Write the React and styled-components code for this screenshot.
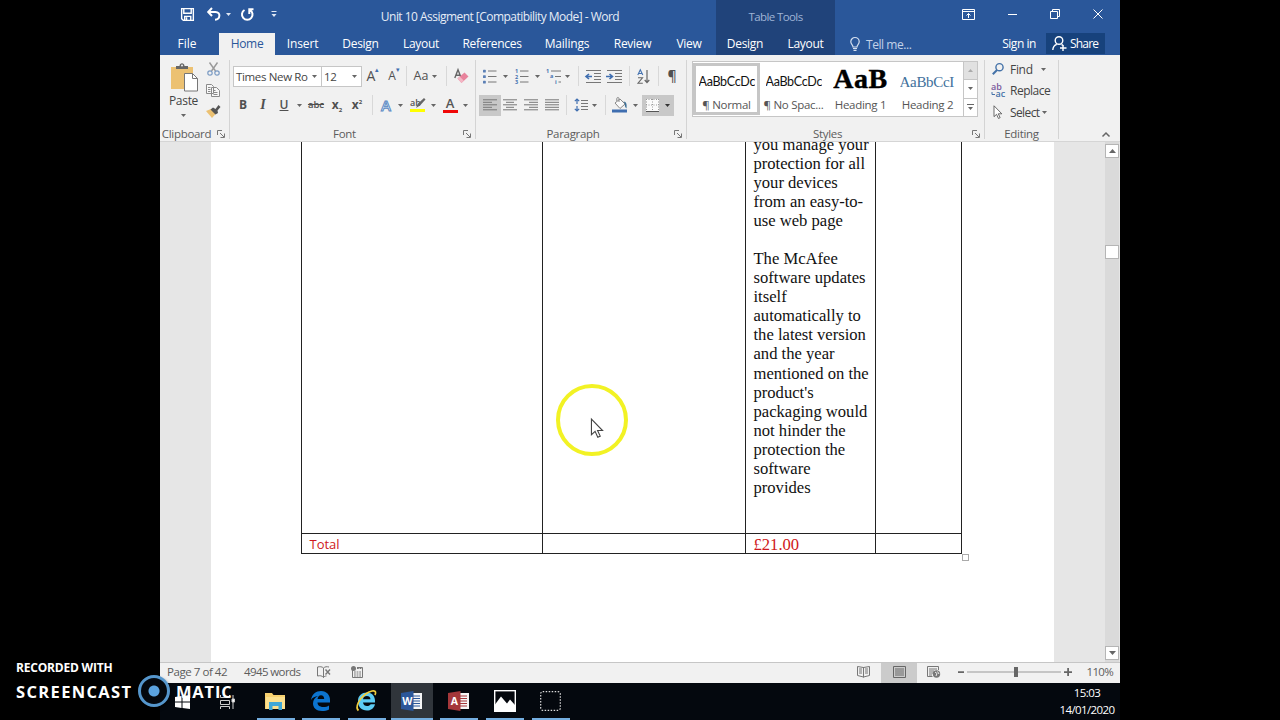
import React from "react";
import styled, { createGlobalStyle, css } from "styled-components";

const GlobalStyle = createGlobalStyle`
  * {
    box-sizing: border-box;
  }
  body {
    margin: 0;
    background: #000;
    overflow: hidden;
    font-family: "Open Sans", "Noto Sans", sans-serif;
    font-size: 12px;
    color: #444;
  }
  svg {
    display: block;
    flex: none;
    overflow: visible;
  }
`;

const tabs = [
  { name: "Insert", w: 55, fit: -0.1 },
  { name: "Design", w: 61, fit: -0.3 },
  { name: "Layout", w: 60, fit: -0.3 },
  { name: "References", w: 82, fit: -0.3 },
  { name: "Mailings", w: 68, fit: -0.2 },
  { name: "Review", w: 63, fit: -0.3 },
  { name: "View", w: 50, fit: -0.3 },
];

const lines = [
  "you manage your",
  "protection for all",
  "your devices",
  "from an easy-to-",
  "use web page",
  "",
  "The McAfee",
  "software updates",
  "itself",
  "automatically to",
  "the latest version",
  "and the year",
  "mentioned on the",
  "product's",
  "packaging would",
  "not hinder the",
  "protection the",
  "software",
  "provides",
];

const Arrow = ({ ml, color = "#666" }) => (
  <Slot $w={7} $ml={ml}>
    <svg width="5" height="3" viewBox="0 0 5 3">
      <path d="M0 0h5L2.500 3z" fill={color} />
    </svg>
  </Slot>
);

const Launcher = () => (
  <svg width="8" height="8" viewBox="0 0 8 8" fill="none" stroke="#777">
    <path d="M.5 5V.5H5M3 3l4 4M7.500 3.500v4h-4" />
  </svg>
);

const Lines = ({ rows, color = "#777" }) => (
  <svg width="14" height="12" viewBox="0 0 14 12" stroke={color}>
    {rows.map(([x1, x2], i) => (
      <path key={i} d={`M${x1} ${i * 2.5 + 0.8}H${x2}`} />
    ))}
  </svg>
);

const Clipboard = () => (
  <svg width="28" height="29" viewBox="0 0 28 29">
    <rect x="1" y="4" width="22" height="22" fill="#ecc172" />
    <path d="M6 6V3h3.500C9.500-.8 14.500-.8 14.500 3H18v3z" fill="#666" />
    <circle cx="12" cy="2.500" r="1" fill="#f1f1f1" />
    <path d="M14.500 10.500h8l5 5v12.500h-13z" fill="#fff" stroke="#777" />
    <path d="M22.500 10.500v5h5" fill="none" stroke="#777" />
  </svg>
);

const Scissors = () => (
  <svg width="13" height="14" viewBox="0 0 13 14" fill="none">
    <path d="M2.500.5l6 8.500M10.500.5l-6 8.500" stroke="#999" strokeWidth="1.400" />
    <circle cx="3" cy="11" r="2.200" stroke="#7c9cc4" strokeWidth="1.200" />
    <circle cx="10" cy="11" r="2.200" stroke="#7c9cc4" strokeWidth="1.200" />
  </svg>
);

const Copy = () => (
  <svg width="14" height="13" viewBox="0 0 14 13" fill="#f8f8f8" stroke="#8a8a8a">
    <path d="M.5.5h5l2 2v7h-7zM5.500 3.500h5l3 3v6h-8z" />
    <path d="M2 3.500h2.500M2 5.500h2.500M2 7.500h2.500M7.500 6.500h2M7.500 8.500h4M7.500 10.500h4" />
  </svg>
);

const Painter = () => (
  <svg width="15" height="13" viewBox="0 0 15 13">
    <path d="M0 6l5-2 5 4.500L6 13z" fill="#ecc172" />
    <path d="M4.500 4.500l2.500-2 2.500 1.500L12.500 0l2 2-3 3.500.5 2.500-2.500 1.500z" fill="#555" />
  </svg>
);

const Eraser = () => (
  <svg width="15" height="14" viewBox="0 0 15 14">
    <path d="M.8 9L4 .8 7.200 9M2 6.200h4" fill="none" stroke="#666" strokeWidth="1.400" />
    <path d="M3.500 9.500L10.500 3.500l4 4-7 6.500z" fill="#e8839c" />
    <path d="M3.500 9.500l2.200-1.900 4 4L7.500 14z" fill="#f3b6c4" />
  </svg>
);

const Highlighter = () => (
  <svg width="16" height="17" viewBox="0 0 16 17">
    <text x="0" y="8.500" fontSize="9" fontWeight="600" fill="#555">ab</text>
    <path d="M6 11l2-4.500L14 1l1.500 1.500-5.500 6z" fill="#666" />
    <rect x="0" y="12" width="15" height="3" fill="#ffff00" />
  </svg>
);

const ListIcon = ({ kind }) => (
  <svg width="14" height="15" viewBox="0 0 14 15">
    {[2, 7.5, 13].map((y, i) => (
      <React.Fragment key={y}>
        {kind === "bullet" ? (
          <rect x="0" y={y - 1.3} width="2.800" height="2.800" rx=".6" fill="#5b7fb5" />
        ) : (
          <text x="0" y={y + 2} fontSize="5.500" fontWeight="700" fill="#4472b0">{i + 1}</text>
        )}
        <path d={`M5 ${y}h8.500`} stroke="#777" />
      </React.Fragment>
    ))}
  </svg>
);

const MultiList = () => (
  <svg width="17" height="15" viewBox="0 0 17 15" stroke="#777">
    <path d="M5 2h10M9 7.500h6M12.500 13H15" />
    <g fill="#4472b0" stroke="none" fontSize="5.500" fontWeight="700">
      <text x="0" y="4">1</text>
      <text x="4" y="9">a</text>
      <text x="9" y="14.500">i</text>
    </g>
  </svg>
);

const Indent = ({ inward }) => (
  <svg width="16" height="13" viewBox="0 0 16 13" fill="none" stroke="#777">
    <path d="M1 .5h15M9 3.500h7M9 6.500h7M9 9.500h7M1 12.500h15" />
    <path d={inward ? "M0 6.500h6M3.500 4l3 2.500-3 2.500" : "M1 6.500h6M4 4L1 6.500 4 9"} stroke="#3f6eb0" strokeWidth="1.600" />
  </svg>
);

const Sort = () => (
  <svg width="13" height="15" viewBox="0 0 13 15" fill="none">
    <path d="M.8 6L3.300.8 5.800 6M1.500 4.500h3.600" stroke="#4472b0" strokeWidth="1.100" />
    <path d="M1 8.800h4.500L1 14.200h4.800" stroke="#666" strokeWidth="1.100" />
    <path d="M10 1v12.500M7.700 11l2.300 2.500L12.300 11" stroke="#666" strokeWidth="1.200" />
  </svg>
);

const Spacing = () => (
  <svg width="14" height="14" viewBox="0 0 14 14" fill="none">
    <path d="M3 1v5M3 8v5M.8 3.200L3 1l2.200 2.200M.8 10.800L3 13l2.200-2.200" stroke="#3f6eb0" strokeWidth="1.200" />
    <path d="M7 2.500h7M7 5.500h7M7 8.500h7M7 11.500h7" stroke="#777" />
  </svg>
);

const Bucket = () => (
  <svg width="16" height="16" viewBox="0 0 16 16">
    <path d="M3 6l5-4 5 5-5 4.500z" fill="#fafafa" stroke="#888" />
    <path d="M7 5V1.500C7 .2 4.800.2 4.800 1.500V4" fill="none" stroke="#888" />
    <path d="M11.500 4.500c3 0 3.500 3 3 7-1.500-1.500-2-3-1.500-4.500z" fill="#3b6f96" />
    <rect x="0" y="12.500" width="15" height="3" fill="#3f6eb0" />
  </svg>
);

const Borders = () => (
  <svg width="13" height="13" viewBox="0 0 13 13">
    <rect width="13" height="12" fill="#fbfbfb" />
    <path d="M.5 0v12M6.500 0v12M12.500 0v12M0 .5h13M0 6h13" stroke="#999" strokeDasharray="1 1.500" />
    <path d="M0 12.500h13" stroke="#555" />
  </svg>
);

const Pointer = ({ size = 13 }) => (
  <svg width={size * 0.7} height={size} viewBox="0 0 12 18">
    <path d="M1 1v14l3.300-3 2.400 5.300 2.200-1-2.400-5H11z" fill="#fff" stroke="#444" strokeWidth="1" />
  </svg>
);

const Magnifier = () => (
  <svg width="12" height="12" viewBox="0 0 12 12" fill="none" stroke="#4472a8">
    <circle cx="7.500" cy="4.200" r="3.600" strokeWidth="1.400" />
    <path d="M5 7L.8 11.200" strokeWidth="2" />
  </svg>
);

const ReplaceIcon = () => (
  <svg width="15" height="15" viewBox="0 0 15 15" fontSize="9" fontWeight="600" letterSpacing="0">
    <text x="0" y="6.500" fill="#7a5a9c">ab</text>
    <text x="4.500" y="13.500" fill="#4472a8">ac</text>
    <path d="M1 9v2.500h3" fill="none" stroke="#4472a8" />
  </svg>
);

const SpellBook = () => (
  <svg width="14" height="12" viewBox="0 0 14 12" fill="none" stroke="#777">
    <path d="M6.500 2C5 .5 3 .5.500 1v9c2.500-.5 4.500-.5 6 1.500 1-1.500 2-1.500 3-1.500M6.500 2v9.500M6.500 2C8 .5 10 .5 12 1" />
    <path d="M8.500 3.500l4.500 5M13 3.500l-4.500 5" strokeWidth="1.400" />
  </svg>
);

const MacroIcon = () => (
  <svg width="12" height="12" viewBox="0 0 12 12" fill="none" stroke="#777">
    <path d="M1.500 4v7.500h10v-10H6" />
    <path d="M6 2.500h5.500M3 6h7M3 8h7M3 10h7" strokeDasharray="1.800 .8" />
    <circle cx="2.500" cy="2.500" r="2.500" fill="#777" stroke="none" />
  </svg>
);

const ReadMode = () => (
  <svg width="13" height="12" viewBox="0 0 13 12" fill="none" stroke="#777">
    <path d="M6.500 1.500L.5.500v9l6 1.500 6-1.500v-9zM6.500 1v10.500" />
    <path d="M2 3h3M2 5h3M2 7h3M8 3h3M8 5h3M8 7h3" />
  </svg>
);

const PrintMode = () => (
  <svg width="13" height="12" viewBox="0 0 13 12" fill="none" stroke="#666">
    <path d="M.5.500h12v11H.5zM2 3h9M2 5h9M2 7h9M2 9h9" />
  </svg>
);

const WebMode = () => (
  <svg width="14" height="12" viewBox="0 0 14 12" fill="none" stroke="#777">
    <path d="M11.500 4V.5H.5v10h5M2 3h8M2 5h5M2 7h4M2 9h3" />
    <circle cx="9.500" cy="8" r="3.700" fill="#777" stroke="none" />
    <path d="M8 6l2 1.500L9 10M10.500 5.500L12 8" stroke="#eee" />
  </svg>
);

const EdgeGlyph = () => (
  <svg width="19" height="20" viewBox="0 0 19 20">
    <path
      d="M0 9C1 3 5 0 10 0c6 0 9 4.500 9 9v2.500H6.500c0 3 2.500 4.500 6 4.500 2 0 4-.5 5.500-1.500v4c-2 1-4.500 1.500-7 1.500C5 20 2 16.500 2 12.500c0-3.500 2-6 5-7.500C4 5.300 1.500 6.500 0 9zm6.500-1h6.700c0-2.500-1.200-3.800-3.200-3.800S7 5.500 6.500 8z"
      fill="#0c74cf"
    />
  </svg>
);

const ExplorerGlyph = () => (
  <svg width="21" height="22" viewBox="0 0 21 22">
    <path
      d="M2 11C2 5.500 6 2.500 10.800 2.500c5.500 0 8.700 4 8.200 10H7c.3 2.500 2 3.500 4 3.500 1.800 0 3-.6 3.600-1.800H19c-1 4-4 6.300-8.200 6.300C5.500 20.500 2 17 2 11zm5-1.800h7.500C14.300 7 13 6 10.900 6 8.700 6 7.300 7.200 7 9.200z"
      fill="#5ccbf3"
    />
    <path d="M2.500 20.500C-1.500 17 4 8 9 4.500 14 .5 19 0 19.500 2c.2.800 0 2-.6 3" fill="none" stroke="#f2cd3c" strokeWidth="1.700" />
  </svg>
);

const OfficeGlyph = ({ letter, color }) => (
  <svg width="21" height="20" viewBox="0 0 21 20">
    <rect x="9" y="2" width="12" height="16" fill="#f5f5f5" />
    <path d="M12 5h7M12 7.500h7M12 10h7M12 12.500h7M12 15h7" stroke={color} />
    <path d="M0 2l12.500-2v20L0 18z" fill={color} />
    <text x="6.300" y="13.800" fontSize="10.500" fontWeight="700" fill="#fff" textAnchor="middle">{letter}</text>
  </svg>
);

const FolderGlyph = () => (
  <svg width="21" height="18" viewBox="0 0 21 18">
    <path d="M0 1h7l1.500 2H20v14H0z" fill="#f6d06f" />
    <path d="M1 5h19v12H1z" fill="#fbe08e" />
    <path d="M4 18v-8h13v8h-3.500v-4h-6v4z" fill="#3fa7d6" />
  </svg>
);

const PhotoGlyph = () => (
  <svg width="22" height="22" viewBox="0 0 22 22">
    <rect x=".7" y=".7" width="20.600" height="20.600" fill="#05080e" stroke="#fff" strokeWidth="1.400" />
    <path d="M1 14.500l6-8 6 7 3-4 5 5.500v6H1z" fill="#fff" />
  </svg>
);

const SnipGlyph = () => (
  <svg width="21" height="20" viewBox="0 0 21 20">
    <rect x=".7" y=".7" width="19.600" height="18.600" rx="2" fill="none" stroke="#ddd" strokeWidth="1.200" strokeDasharray="1.500 1.500" />
  </svg>
);

const apps = [
  { name: "folder", icon: <FolderGlyph />, w: 38 },
  { name: "edge", icon: <EdgeGlyph />, w: 38, ml: 7 },
  { name: "explorer", icon: <ExplorerGlyph />, w: 38, ml: 8 },
  { name: "word", icon: <OfficeGlyph letter="W" color="#2b579a" />, w: 42, ml: 5, active: true },
  { name: "access", icon: <OfficeGlyph letter="A" color="#a4373a" />, w: 38, ml: 7 },
  { name: "photos", icon: <PhotoGlyph />, w: 38, ml: 8 },
  { name: "snip", icon: <SnipGlyph />, w: 38, ml: 8 },
];

function TitleBar() {
  return (
    <TitleRow>
      <QuickAccess>
        <Slot $w={16} $ml={19}>
          <svg width="13" height="13" viewBox="0 0 14 14" fill="none" stroke="#fff" strokeWidth="1.500">
            <path d="M.7.7h12.600v12.600H2.500L.7 11.500zM3 .7v5h8v-5M4 13V9h6.500v4M6 10v3" />
          </svg>
        </Slot>
        <Slot $w={16} $ml={11}>
          <svg width="14" height="13" viewBox="0 0 14 13" fill="none" stroke="#fff" strokeWidth="2">
            <path d="M5 0L1.200 4 5 8M1.500 4h7c5.500 0 5 7.500-.5 7.700" />
          </svg>
        </Slot>
        <Arrow ml={3} color="#dfe7f3" />
        <Slot $w={16} $ml={7}>
          <svg width="13" height="13" viewBox="0 0 13 13" fill="none" stroke="#fff" strokeWidth="2">
            <path d="M3.500 2A5.300 5.300 0 1 0 9 2M8.300 6V1.200H12.500" />
          </svg>
        </Slot>
        <Slot $w={8} $ml={15}>
          <svg width="6" height="6" viewBox="0 0 6 6" fill="#dfe7f3">
            <path d="M.5 0h5v1h-5zM.5 3h5L3 6z" />
          </svg>
        </Slot>
      </QuickAccess>
      <DocTitle>Unit 10 Assigment [Compatibility Mode] - Word</DocTitle>
      <ContextTitle>Table Tools</ContextTitle>
      <WindowButtons>
        <svg width="13" height="11" viewBox="0 0 13 11" fill="none" stroke="#fff">
          <path d="M.5.500h12v10H.5zM.5 2.500h12M6.500 9V4.500M4.500 6.500l2-2 2 2" />
        </svg>
        <svg width="9" height="10" viewBox="0 0 9 10" stroke="#fff">
          <path d="M0 5.500h9" />
        </svg>
        <svg width="10" height="10" viewBox="0 0 10 10" fill="none" stroke="#fff">
          <path d="M.5 2.500h7v7h-7zM2.500 2.500v-2h7v7h-2" />
        </svg>
        <svg width="10" height="10" viewBox="0 0 10 10" stroke="#fff">
          <path d="M.5.500l9 9M9.500.500l-9 9" />
        </svg>
      </WindowButtons>
    </TitleRow>
  );
}

function TabBar() {
  return (
    <TabRow>
      <Tab $w={54}>File</Tab>
      <HomeTab>Home</HomeTab>
      {tabs.map((tab) => (
        <Tab key={tab.name} $w={tab.w} $fit={tab.fit}>{tab.name}</Tab>
      ))}
      <ContextTabs>
        <Tab $w={58} $fit={-0.3}>Design</Tab>
        <Tab $w={63} $fit={-0.3}>Layout</Tab>
      </ContextTabs>
      <TellMe>
        <svg width="10" height="14" viewBox="0 0 10 14" fill="none" stroke="#d5e0f0" strokeWidth="1.200">
          <path d="M3 10C3 8 .8 7.200.8 4.700a4.200 4.200 0 0 1 8.400 0C9.200 7.200 7 8 7 10zM3 11.500h4M3.500 13.300h3" />
        </svg>
        Tell me...
      </TellMe>
      <SignIn>Sign in</SignIn>
      <Share>
        <svg width="15" height="15" viewBox="0 0 15 15" fill="none" stroke="#fff" strokeWidth="1.400">
          <circle cx="7" cy="4.500" r="3.800" />
          <path d="M.8 14c.2-3 1.700-5 4-5.700M9.500 8.500c.8.300 1.500 1 2 1.800M11 9v6M8 12h6.500" />
        </svg>
        Share
      </Share>
    </TabRow>
  );
}

function ClipboardGroup() {
  return (
    <Group $w={70}>
      <ClipboardBody>
        <PasteButton>
          <Clipboard />
          <span>Paste</span>
          <Arrow />
        </PasteButton>
        <ClipboardTools>
          <Scissors />
          <Copy />
          <Painter />
        </ClipboardTools>
      </ClipboardBody>
      <GroupLabel><span>Clipboard</span><Launcher /></GroupLabel>
    </Group>
  );
}

function FontGroup() {
  return (
    <Group $w={246}>
      <Tools>
        <Combo $w={89} $ml={3}>Times New Ro<Arrow /></Combo>
        <Combo $w={41}>12<Arrow /></Combo>
        <Slot $w={16} $ml={3}><Glyph $size={14}>A</Glyph><Caret>▴</Caret></Slot>
        <Slot $w={16} $ml={5}><Glyph $size={12}>A</Glyph><Caret>▾</Caret></Slot>
        <Rule $ml={4} />
        <Slot $w={20} $ml={4}><Glyph $size={12.5}>Aa</Glyph></Slot>
        <Arrow />
        <Rule $ml={8} />
        <Slot $w={16} $ml={6}><Eraser /></Slot>
      </Tools>
      <Tools>
        <Slot $w={14} $ml={6}><Glyph $size={12} $weight={700}>B</Glyph></Slot>
        <Slot $w={14} $ml={6}><Glyph as="i" $size={14} $weight={700} $serif>I</Glyph></Slot>
        <Slot $w={14} $ml={7}><Glyph as="u" $size={12} $weight={600}>U</Glyph></Slot>
        <Arrow ml={5} />
        <Slot $w={18} $ml={4}><Glyph as="s" $size={9.5} $weight={600}>abc</Glyph></Slot>
        <Slot $w={14} $ml={5}><Glyph $size={12} $weight={700}>x<sub>2</sub></Glyph></Slot>
        <Slot $w={14} $ml={6}><Glyph $size={12} $weight={700}>x<sup>2</sup></Glyph></Slot>
        <Rule $ml={8} />
        <Slot $w={16} $ml={5}><Outlined>A</Outlined></Slot>
        <Arrow ml={3} />
        <Slot $w={16} $ml={6}><Highlighter /></Slot>
        <Arrow ml={4} />
        <Slot $w={16} $ml={5}><FontColor>A</FontColor></Slot>
        <Arrow ml={4} />
      </Tools>
      <GroupLabel><span>Font</span><Launcher /></GroupLabel>
    </Group>
  );
}

function ParagraphGroup() {
  return (
    <Group $w={211}>
      <Tools>
        <Slot $w={16} $ml={6}><ListIcon kind="bullet" /></Slot>
        <Arrow ml={4} />
        <Slot $w={16} $ml={5}><ListIcon kind="number" /></Slot>
        <Arrow ml={4} />
        <Slot $w={18} $ml={4}><MultiList /></Slot>
        <Arrow ml={1} />
        <Rule $ml={7} />
        <Slot $w={16} $ml={6}><Indent /></Slot>
        <Slot $w={16} $ml={5}><Indent inward /></Slot>
        <Rule $ml={7} />
        <Slot $w={16} $ml={5}><Sort /></Slot>
        <Rule $ml={7} />
        <Slot $w={16} $ml={5}><Glyph $size={14} $weight={600}>¶</Glyph></Slot>
      </Tools>
      <Tools>
        <Pressed $w={22} $ml={3}><Lines rows={[[0, 14], [0, 9], [0, 14], [0, 9], [0, 14]]} /></Pressed>
        <Slot $w={16} $ml={1}><Lines rows={[[0, 14], [3, 11], [0, 14], [3, 11], [0, 14]]} /></Slot>
        <Slot $w={16} $ml={5}><Lines rows={[[0, 14], [5, 14], [0, 14], [5, 14], [0, 14]]} /></Slot>
        <Slot $w={16} $ml={5}><Lines rows={[[0, 14], [0, 14], [0, 14], [0, 14], [0, 14]]} /></Slot>
        <Rule $ml={6} />
        <Slot $w={16} $ml={6}><Spacing /></Slot>
        <Arrow ml={2} />
        <Rule $ml={7} />
        <Slot $w={16} $ml={6}><Bucket /></Slot>
        <Arrow ml={4} />
        <Pressed $w={32} $ml={3}><Borders /><Arrow ml={5} color="#333" /></Pressed>
      </Tools>
      <GroupLabel><span>Paragraph</span><Launcher /></GroupLabel>
    </Group>
  );
}

function StylesGroup() {
  return (
    <Group $w={298}>
      <Gallery>
        <StyleCard $selected>
          <Sample>AaBbCcDc</Sample>
          <span>¶ Normal</span>
        </StyleCard>
        <StyleCard>
          <Sample>AaBbCcDc</Sample>
          <span>¶ No Spac...</span>
        </StyleCard>
        <StyleCard>
          <Sample $heading>AaB</Sample>
          <span>Heading 1</span>
        </StyleCard>
        <StyleCard>
          <Sample $light>AaBbCcI</Sample>
          <span>Heading 2</span>
        </StyleCard>
        <GalleryScroll>
          <div><svg width="5" height="3" viewBox="0 0 5 3"><path d="M0 3h5L2.500 0z" fill="#aaa" /></svg></div>
          <div><Arrow /></div>
          <div>
            <svg width="7" height="7" viewBox="0 0 7 7" fill="#666"><path d="M0 0h7v1H0zM1 3h5L3.500 6z" /></svg>
          </div>
        </GalleryScroll>
      </Gallery>
      <GroupLabel><span>Styles</span><Launcher /></GroupLabel>
    </Group>
  );
}

function EditingGroup() {
  return (
    <Group $w={74}>
      <EditList>
        <EditItem $fit={-0.3}><Slot $w={16}><Magnifier /></Slot>Find<Arrow ml={7} /></EditItem>
        <EditItem $fit={-0.5}><Slot $w={16}><ReplaceIcon /></Slot>Replace</EditItem>
        <EditItem $fit={-0.6}><Slot $w={16}><Pointer size={14} /></Slot>Select<Arrow ml={1} /></EditItem>
      </EditList>
      <GroupLabel><span>Editing</span></GroupLabel>
    </Group>
  );
}

function ScrollBar() {
  return (
    <ScrollTrack>
      <ScrollButton>
        <svg width="7" height="4" viewBox="0 0 7 4"><path d="M0 4h7L3.500 0z" fill="#666" /></svg>
      </ScrollButton>
      <ScrollThumb />
      <ScrollButton>
        <svg width="7" height="4" viewBox="0 0 7 4"><path d="M0 0h7L3.500 4z" fill="#666" /></svg>
      </ScrollButton>
    </ScrollTrack>
  );
}

function StatusBar() {
  return (
    <Status>
      <PageCount>Page 7 of 42</PageCount>
      <WordCount>4945 words</WordCount>
      <Slot $w={16} $ml={17}><SpellBook /></Slot>
      <Slot $w={16} $ml={17}><MacroIcon /></Slot>
      <ViewModes>
        <Slot $w={36}><ReadMode /></Slot>
        <ActiveMode $w={36}><PrintMode /></ActiveMode>
        <Slot $w={34}><WebMode /></Slot>
      </ViewModes>
      <Zoom>
        <svg width="114" height="12" viewBox="0 0 114 12" fill="#666">
          <path d="M0 5.200h6v1.800H0zM106 5.200h8v1.800h-8zM109.200 2h1.800v8h-1.800z" />
          <path d="M9 5.600h94v1H9z" fill="#999" />
          <rect x="56" y="1" width="4" height="10" />
        </svg>
        <span>110%</span>
      </Zoom>
    </Status>
  );
}

function TaskBar() {
  return (
    <Tasks>
      <Start>
        <svg width="15" height="14" viewBox="0 0 15 14" fill="#fff">
          <path d="M0 2l6.500-1v5.500H0zM7.500.900L15 0v6.500H7.500zM0 7.500h6.500V13L0 12zM7.500 7.500H15V14l-7.500-1z" />
        </svg>
        <svg width="15" height="14" viewBox="0 0 15 14" fill="none" stroke="#ccc">
          <path d="M.5 0v2.500h9V0M.5 5.500h9v4h-9zM.5 14v-2.500h9V14M13 0v14" />
          <path d="M12 4h2.500v3H12z" fill="#fff" />
        </svg>
      </Start>
      {apps.map((app) => (
        <TaskButton key={app.name} $w={app.w} $ml={app.ml} $active={app.active}>
          {app.icon}
        </TaskButton>
      ))}
      <Clock>
        <span>15:03</span>
        <span>14/01/2020</span>
      </Clock>
    </Tasks>
  );
}

export default function App() {
  return (
    <>
      <GlobalStyle />
      <Desktop>
        <TitleBar />
        <TabBar />
        <Ribbon>
          <ClipboardGroup />
          <FontGroup />
          <ParagraphGroup />
          <StylesGroup />
          <EditingGroup />
          <Collapse>
            <svg width="8" height="5" viewBox="0 0 8 5" fill="none" stroke="#666" strokeWidth="1.500">
              <path d="M.5 4.500L4 1l3.500 3.500" />
            </svg>
          </Collapse>
        </Ribbon>
        <Workspace>
          <Page>
            <Table>
              <Cell />
              <Cell />
              <Cell>
                {lines.map((line, i) => (
                  <Line key={i}>{line}</Line>
                ))}
              </Cell>
              <Cell />
              <Cell $total $sans>Total</Cell>
              <Cell $total />
              <Cell $total>£21.00</Cell>
              <Cell $total />
              <Handle />
            </Table>
          </Page>
          <ScrollBar />
        </Workspace>
        <StatusBar />
        <TaskBar />
      </Desktop>
      <Halo>
        <Pointer size={20} />
      </Halo>
      <Watermark>
        <small>RECORDED WITH</small>
        <div>
          <Brand $w={116} $fit={1.35}>SCREENCAST</Brand>
          <Record />
          <Brand $fit={0.8}>MATIC</Brand>
        </div>
      </Watermark>
    </>
  );
}

const Desktop = styled.div`
  width: 960px;
  height: 720px;
  margin: 0 160px;
  display: flex;
  flex-direction: column;
  overflow: hidden;
`;

const Slot = styled.div`
  width: ${(p) => p.$w}px;
  margin-left: ${(p) => p.$ml || 0}px;
  flex: none;
  display: flex;
  align-items: center;
  justify-content: center;
`;

const TitleRow = styled.header`
  height: 33px;
  display: flex;
  background: #2a579a;
  color: #e6edf7;
`;

const QuickAccess = styled.div`
  width: 124px;
  height: 28px;
  display: flex;
  align-items: center;
`;

const DocTitle = styled.div`
  width: 432px;
  line-height: 34px;
  text-align: center;
  white-space: nowrap;
  letter-spacing: -0.53px;
`;

const ContextTitle = styled.div`
  width: 119px;
  line-height: 33px;
  text-align: center;
  font-size: 11.5px;
  background: #20437a;
  color: #9fb4d6;
  letter-spacing: -0.6px;
`;

const WindowButtons = styled.div`
  width: 174px;
  height: 28px;
  margin-left: auto;
  padding-right: 1px;
  display: flex;
  align-items: center;
  svg {
    margin: 0 auto;
  }
`;

const TabRow = styled.nav`
  height: 22px;
  display: flex;
  background: #2a579a;
  color: #fff;
`;

const Tab = styled.div`
  width: ${(p) => p.$w}px;
  flex: none;
  line-height: 22px;
  text-align: center;
  letter-spacing: ${(p) => p.$fit || 0}px;
`;

const HomeTab = styled(Tab)`
  width: 56px;
  margin-left: 5px;
  background: #f1f1f1;
  color: #2a579a;
  letter-spacing: -0.3px;
`;

const ContextTabs = styled.div`
  width: 119px;
  margin-left: 2px;
  display: flex;
  background: #20437a;
`;

const TellMe = styled.div`
  margin-left: 15px;
  width: 120px;
  display: flex;
  align-items: center;
  gap: 6px;
  letter-spacing: -0.45px;
  color: #c3d2e8;
`;

const SignIn = styled.div`
  margin-left: auto;
  line-height: 22px;
  letter-spacing: -0.45px;
`;

const Share = styled.div`
  width: 59px;
  height: 21px;
  margin: 0 15px 0 10px;
  padding-left: 6px;
  display: flex;
  align-items: center;
  gap: 3px;
  background: #17427c;
  letter-spacing: -0.8px;
`;

const Ribbon = styled.section`
  height: 87px;
  flex: none;
  display: flex;
  padding: 5px 0 2px;
  background: #f1f1f1;
  border-bottom: 1px solid #d5d5d5;
`;

const Group = styled.div`
  width: ${(p) => p.$w}px;
  flex: none;
  display: flex;
  flex-direction: column;
  border-right: 1px solid #d4d4d4;
`;

const GroupLabel = styled.div`
  margin-top: auto;
  height: 10px;
  padding-right: 4px;
  display: flex;
  align-items: center;
  line-height: 10px;
  font-size: 11.5px;
  letter-spacing: -0.3px;
  color: #5c5c5c;
  span {
    flex: 1;
    text-align: center;
  }
  span:not(:only-child) {
    padding-right: 4px;
  }
  span:only-child {
    padding-left: 4px;
  }
`;

const ClipboardBody = styled.div`
  display: flex;
  padding: 3px 0 0 8px;
`;

const PasteButton = styled.div`
  width: 31px;
  height: 58px;
  display: flex;
  flex-direction: column;
  align-items: center;
  letter-spacing: -0.3px;
  span {
    line-height: 18px;
    margin-bottom: 4px;
  }
`;

const ClipboardTools = styled.div`
  width: 16px;
  height: 56px;
  margin: -1px 0 0 6px;
  display: flex;
  flex-direction: column;
  align-items: center;
  justify-content: space-between;
`;

const Tools = styled.div`
  height: 29px;
  flex: none;
  display: flex;
  align-items: center;
  padding-top: 3px;
`;

const Combo = styled.div`
  width: ${(p) => p.$w}px;
  height: 21px;
  margin-left: ${(p) => p.$ml || -1}px;
  padding: 0 3px 0 2px;
  flex: none;
  display: flex;
  align-items: center;
  justify-content: space-between;
  background: #fff;
  border: 1px solid #c6c6c6;
  font-size: 11.5px;
  white-space: nowrap;
  letter-spacing: -0.35px;
`;

const Glyph = styled.span`
  font-size: ${(p) => p.$size}px;
  font-weight: ${(p) => p.$weight || 400};
  font-family: ${(p) => (p.$serif ? '"Liberation Serif", serif' : "inherit")};
  line-height: 20px;
  color: #505050;
  sub,
  sup {
    font-size: 6px;
    line-height: 0;
  }
`;

const Caret = styled.span`
  align-self: flex-start;
  font-size: 7px;
  line-height: 7px;
  color: #3f6eb0;
`;

const Outlined = styled.span`
  font-size: 15px;
  font-weight: 600;
  line-height: 20px;
  color: #f1f6fc;
  -webkit-text-stroke: 1px #5b8ac4;
`;

const FontColor = styled.span`
  width: 15px;
  height: 16px;
  text-align: center;
  font-weight: 600;
  font-size: 13px;
  line-height: 13px;
  color: #555;
  border-bottom: 3px solid #f00808;
`;

const Rule = styled.i`
  width: 1px;
  height: 20px;
  flex: none;
  margin-left: ${(p) => p.$ml}px;
  background: #d8d8d8;
`;

const Pressed = styled(Slot)`
  height: 21px;
  background: #c8c8c8;
`;

const Gallery = styled.div`
  width: 286px;
  height: 56px;
  margin: 1px 0 0 5px;
  display: flex;
  background: #fff;
  border: 1px solid #c6c6c6;
`;

const StyleCard = styled.div`
  width: 67px;
  height: 52px;
  margin-top: 1px;
  flex: none;
  display: flex;
  flex-direction: column;
  align-items: center;
  overflow: hidden;
  white-space: nowrap;
  font-size: 11.5px;
  letter-spacing: -0.3px;
  color: #555;
  box-shadow: ${(p) => (p.$selected ? "inset 0 0 0 3px #c6c6c6" : "none")};
  span {
    line-height: 16px;
  }
`;

const Sample = styled.div`
  width: 56px;
  height: 34px;
  padding-top: 4px;
  overflow: hidden;
  line-height: 30px;
  font-family: Lato, sans-serif;
  font-size: 12.5px;
  color: #111;
  ${(p) =>
    p.$heading &&
    css`
      padding-top: 0;
      font: bold 28px/31px "Liberation Serif", serif;
      letter-spacing: 0.6px;
      text-align: center;
      color: #000;
      -webkit-text-stroke: 0.4px #000;
    `}
  ${(p) =>
    p.$light &&
    css`
      font-family: "Liberation Serif", serif;
      font-size: 15px;
      color: #41719c;
    `}
`;

const GalleryScroll = styled.div`
  margin-left: auto;
  width: 14px;
  display: flex;
  flex-direction: column;
  border-left: 1px solid #c6c6c6;
  div {
    flex: 1;
    display: flex;
    align-items: center;
    justify-content: center;
  }
  > div + div {
    border-top: 1px solid #c6c6c6;
  }
  > div:first-child {
    background: #e1e1e1;
  }
`;

const EditList = styled.div`
  padding-left: 5px;
`;

const EditItem = styled.div`
  height: 21.5px;
  display: flex;
  align-items: center;
  padding-bottom: 3px;
  letter-spacing: ${(p) => p.$fit}px;
  ${Slot}:first-child {
    margin-right: 4px;
  }
`;

const Collapse = styled.div`
  margin: auto 10px 2px auto;
`;

const Workspace = styled.main`
  height: 520px;
  flex: none;
  display: flex;
  background: #e6e6e6;
`;

const Page = styled.article`
  width: 843px;
  margin-left: 51px;
  padding-left: 90px;
  overflow: hidden;
  background: #fff;
`;

const Table = styled.div`
  position: relative;
  width: 661px;
  height: 412px;
  display: grid;
  grid-template-columns: 241.4px 202.6px 130px 86px;
  grid-template-rows: 391px 20px;
  border-right: 1px solid #222;
  border-bottom: 1px solid #222;
`;

const Cell = styled.div`
  border-left: 1px solid #222;
  padding-left: 7.5px;
  overflow: hidden;
  font-family: "Liberation Serif", serif;
  font-size: 16.6px;
  color: #111;
  ${(p) =>
    p.$total &&
    css`
      border-top: 1px solid #222;
      line-height: 21px;
      color: #cf1820;
    `}
  ${(p) =>
    p.$sans &&
    css`
      font-family: "Open Sans", sans-serif;
      font-size: 13px;
      font-weight: 500;
    `}
`;

const Line = styled.div`
  height: 19.08px;
  line-height: 19px;
  white-space: nowrap;
  &:first-child {
    margin-top: -7.400px;
  }
`;

const Handle = styled.i`
  position: absolute;
  right: -8px;
  bottom: -8px;
  width: 7px;
  height: 7px;
  border: 1px solid #aaa;
  background: #fff;
`;

const ScrollTrack = styled.aside`
  width: 14px;
  margin: 0 1px 0 auto;
  padding: 2px 0;
  display: flex;
  flex-direction: column;
  justify-content: space-between;
  background: #dadada;
`;

const ScrollButton = styled.div`
  width: 14px;
  height: 14px;
  display: flex;
  align-items: center;
  justify-content: center;
  background: #fff;
  border: 1px solid #b5b5b5;
`;

const ScrollThumb = styled(ScrollButton)`
  margin-bottom: 300px;
`;

const Status = styled.footer`
  height: 21px;
  flex: none;
  display: flex;
  align-items: center;
  background: #f1f1f1;
  border-top: 1px solid #c6c6c6;
  color: #5c5c5c;
  font-size: 11.5px;
  padding-bottom: 3px;
`;

const PageCount = styled.span`
  width: 77px;
  margin-left: 7px;
  letter-spacing: -0.45px;
`;

const WordCount = styled.span`
  width: 55px;
  white-space: nowrap;
  letter-spacing: -0.6px;
`;

const ViewModes = styled.div`
  height: 17px;
  margin-left: auto;
  display: flex;
`;

const ActiveMode = styled(Slot)`
  height: 20px;
  padding-bottom: 3px;
  background: #cbcbcb;
`;

const Zoom = styled.div`
  margin: 0 7px;
  width: 155px;
  display: flex;
  align-items: center;
  justify-content: space-between;
  letter-spacing: -0.7px;
`;

const Tasks = styled.footer`
  height: 37px;
  flex: none;
  display: flex;
  background: #04080e;
`;

const Start = styled.div`
  width: 97px;
  padding-left: 15px;
  display: flex;
  align-items: center;
  gap: 30px;
`;

const TaskButton = styled.div`
  width: ${(p) => p.$w}px;
  margin-left: ${(p) => p.$ml || 0}px;
  display: flex;
  align-items: center;
  justify-content: center;
  padding: 1px 1px 0 0;
  background: ${(p) => (p.$active ? "#30353b" : "transparent")};
  border-bottom: 2px solid #74aee0;
`;

const Clock = styled.div`
  margin-left: auto;
  width: 66px;
  display: flex;
  flex-direction: column;
  align-items: center;
  font-size: 11.5px;
  line-height: 17px;
  padding-top: 1px;
  letter-spacing: -0.6px;
  color: #fff;
`;

const Halo = styled.div`
  position: absolute;
  left: 556px;
  top: 384px;
  width: 72px;
  height: 72px;
  border: 4px solid #f2f224;
  border-radius: 50%;
  svg {
    margin: 30px 0 0 30px;
  }
`;

const Watermark = styled.div`
  position: absolute;
  left: 16px;
  top: 660px;
  color: #fff;
  small {
    display: block;
    font-size: 12px;
    font-weight: 700;
    line-height: 16px;
    letter-spacing: -0.2px;
  }
  div {
    display: flex;
    align-items: center;
    margin-top: -1px;
  }
`;

const Brand = styled.span`
  width: ${(p) => (p.$w ? `${p.$w}px` : "auto")};
  font-size: 16.5px;
  font-weight: 700;
  letter-spacing: ${(p) => p.$fit}px;
`;

const Record = styled.i`
  width: 32px;
  height: 32px;
  margin: 0 6px;
  border-radius: 50%;
  border: 3px solid #5596cc;
  background: radial-gradient(circle, #5ba3e0 0 5px, #04080e 6px);
  box-shadow: 1px 2px 3px rgba(0, 0, 0, 0.5);
`;
